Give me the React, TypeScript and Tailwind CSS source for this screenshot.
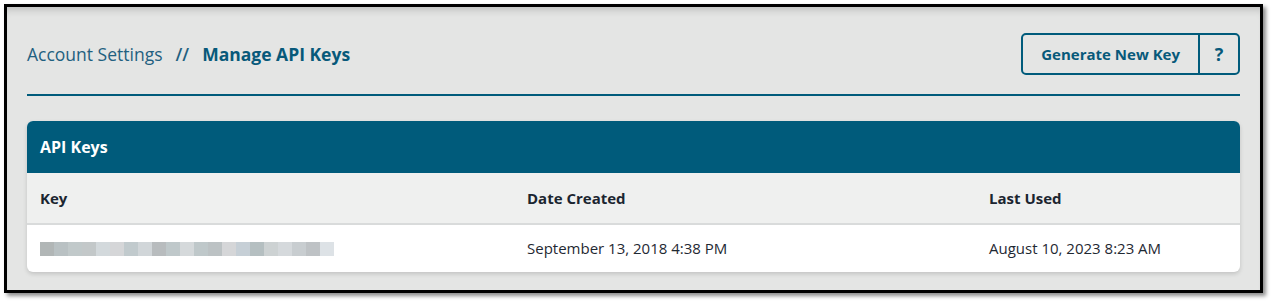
const keyBlocks = [
  '#b1b6b6', '#b9c1c3', '#c1c9ca', '#c3c8c9', '#d3d9dc', '#d5d6d8', '#c1cacd',
  '#d1d6d9', '#b8bcbe', '#bfc8ca', '#d5d9db', '#bfc8ca', '#bcc2c4', '#d5d6d8',
  '#c6cfd6', '#b5bfc1', '#cdd2d3', '#d5d9dc', '#c8cdd0', '#bec2c5', '#dde2e6',
];

function BlurredKey() {
  return (
    <div className="flex">
      {keyBlocks.map((c, i) => (
        <span key={i} className="h-[14px] w-[14px]" style={{ backgroundColor: c }} />
      ))}
    </div>
  );
}

export default function App() {
  return (
    <div className="h-[302px] w-[1271px] bg-white pt-[4px] pl-[4px] font-['Open_Sans',sans-serif]">
      <div className="h-[289px] w-[1259px] border-[3px] border-black bg-[#e4e5e4] shadow-[3px_3px_4px_rgba(0,0,0,0.45),inset_0_8px_8px_-6px_rgba(0,0,0,0.2)]">
        <div className="px-5 pt-[26px]">
          <div className="flex items-center justify-between">
            <div className="flex items-center text-[17.5px] text-[#1f6080]">
              <span>Account Settings</span>
              <span className="mx-[13px] font-semibold">//</span>
              <span className="font-bold text-[#07597a]">Manage API Keys</span>
            </div>
            <div className="flex font-bold text-[#07597a]">
              <button className="h-[42px] rounded-l-[5px] border-2 border-[#005b7b] px-[18px] text-[15px]">
                Generate New Key
              </button>
              <button className="-ml-[2px] h-[42px] w-[42px] rounded-r-[5px] border-2 border-[#005b7b] text-[18px]">
                ?
              </button>
            </div>
          </div>
          <div className="mt-[19px] h-[2px] bg-[#005b7b]" />

          <div className="mt-[25px] overflow-hidden rounded-[6px] bg-white shadow-[0_2px_4px_rgba(0,0,0,0.15)]">
            <div className="flex h-[52px] items-center bg-[#005b7b] pl-[13px] text-[16px] font-bold text-white">
              API Keys
            </div>
            <div className="flex h-[52px] items-center border-b-2 border-[#d9dbdb] bg-[#eff0ef] text-[15px] font-bold text-[#1b2530]">
              <div className="w-[487px] pl-[13px]">Key</div>
              <div className="w-[462px] pl-[13px]">Date Created</div>
              <div className="flex-1 pl-[13px]">Last Used</div>
            </div>
            <div className="flex h-[47px] items-center text-[15px] text-[#1f2933]">
              <div className="w-[487px] pl-[13px]">
                <BlurredKey />
              </div>
              <div className="w-[462px] pl-[13px]">September 13, 2018 4:38 PM</div>
              <div className="flex-1 pl-[13px]">August 10, 2023 8:23 AM</div>
            </div>
          </div>
        </div>
      </div>
    </div>
  );
}
